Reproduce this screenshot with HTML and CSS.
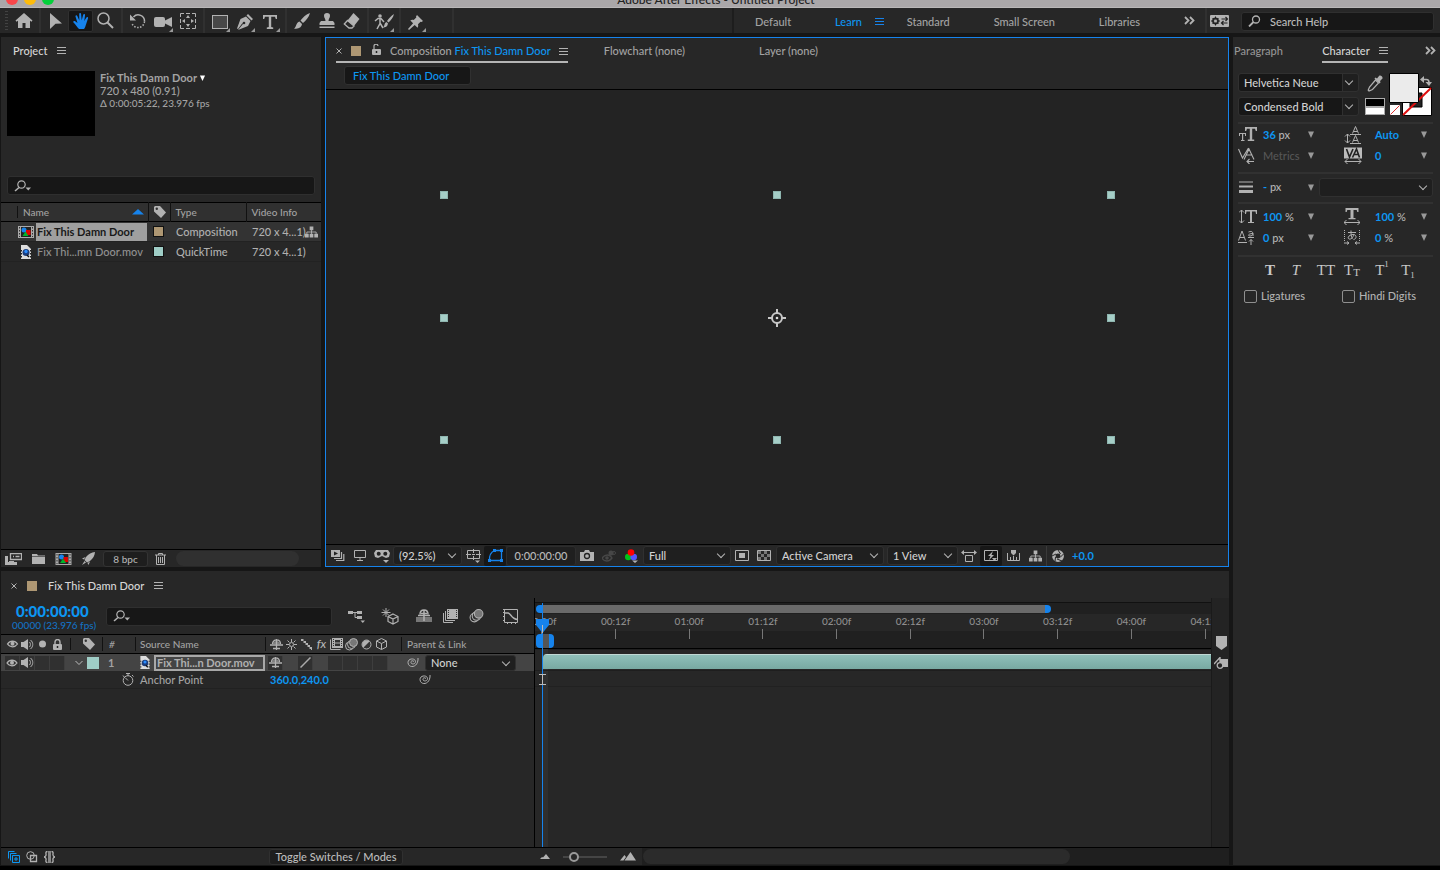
FILE: index.html
```html
<!DOCTYPE html>
<html lang="en">
<head>
<meta charset="utf-8">
<meta name="viewport" content="width=device-width, initial-scale=1">
<title>Adobe After Effects - Untitled Project</title>
<link rel="stylesheet" href="styles.css">
</head>
<body>
<svg class="defs" aria-hidden="true">
  <symbol id="menu" viewBox="0 0 9 8"><path d="M0 .5h9M0 3.5h9M0 6.5h9" stroke="currentColor"/></symbol>
  <symbol id="close" viewBox="0 0 6 6"><path d="M.5.5l5 5M5.500.5l-5 5" stroke="currentColor"/></symbol>
  <symbol id="more" viewBox="0 0 11 9"><path d="M1 1l3.500 3.500L1 8M6 1l3.500 3.500L6 8" fill="none" stroke="currentColor" stroke-width="1.800"/></symbol>
  <symbol id="tri" viewBox="0 0 6 7"><path d="M0 .5h6L3 7z" fill="currentColor"/></symbol>
  <symbol id="home" viewBox="0 0 18 16"><path d="M9 0l8.500 7.500-1 1.200-1.500-1V15h-4.500v-5h-3v5H3V7.700l-1.500 1-1-1.200z" fill="currentColor"/></symbol>
  <symbol id="arrow" viewBox="0 0 12 16"><path d="M0 0l12 10.500-6.500.3L0 16z" fill="currentColor"/></symbol>
  <symbol id="hand" viewBox="0 0 16 16"><path d="M6 16C4 14 2.500 11.500.500 9.500c-.8-1 .6-2 1.700-1.200L4.500 10 2.500 3.500c-.3-1.400 1.400-1.800 1.800-.5L6.300 7.500 6.200 1.200C6.200-.300 8-.300 8.100 1.200L8.700 7.300 10.200 1.800c.4-1.300 2-.9 1.800.5L11.300 8l2-3.300c.7-1.200 2.200-.4 1.700.8L13 11.500c-.6 2-.9 3-2 4.500z" fill="currentColor"/></symbol>
  <symbol id="zoom" viewBox="0 0 17 17"><circle cx="6.500" cy="6.500" r="5.500" fill="none" stroke="currentColor" stroke-width="1.500"/><path d="M10.500 10.500l5.500 5.500" stroke="currentColor" stroke-width="2"/></symbol>
  <symbol id="rotate" viewBox="0 0 16 16"><path d="M3.500 4A6.300 6.300 0 0 1 14.500 8.500" fill="none" stroke="currentColor" stroke-width="1.500"/><path d="M14.500 8.500A6.500 6.500 0 0 1 2 10.500" fill="none" stroke="currentColor" stroke-width="1.500" stroke-dasharray="1.500 1.500"/><path d="M0 1.500v6h6z" fill="currentColor"/></symbol>
  <symbol id="camera" viewBox="0 0 18 12"><rect y="1" width="11" height="10" rx="2" fill="currentColor"/><path d="M10 5l8-4v10l-8-4z" fill="currentColor"/></symbol>
  <symbol id="panbehind" viewBox="0 0 16 16"><path d="M.5 4V.5H4M6 .5h4M12 .5h3.500V4M15.500 6v4M15.500 12v3.500H12M10 15.500H6M4 15.500H.5V12M.5 10V6" fill="none" stroke="currentColor"/><path d="M8 2l2 3H6zM8 14l2-3H6zM2 8l3-2v4zM14 8l-3-2v4z" fill="currentColor"/></symbol>
  <symbol id="rect" viewBox="0 0 16 14"><rect x=".5" y=".5" width="15" height="13" fill="#484848" stroke="currentColor"/></symbol>
  <symbol id="pen" viewBox="0 0 16 16"><path d="M11 0l5 5-1.500 1.500-5-5zM9 2.500L13.500 7 11 12 1 16l5-6-.5-1L1 15 0 14.500 3.500 5z" fill="currentColor"/><circle cx="7" cy="9" r="1.300" fill="#272727"/></symbol>
  <symbol id="type" viewBox="0 0 14 14"><path d="M0 0h14v4h-1.200L12 1.800H8.200V12l2 .5V14H3.800v-1.500l2-.5V1.800H2L1.200 4H0z" fill="currentColor"/></symbol>
  <symbol id="brush" viewBox="0 0 16 16"><path d="M16 0c-1 4-4 7.500-7 10L6.500 7.500C9 4.500 12 1 16 0zM5.500 8.500L8 11c-.5 4-4.500 5-8 4.800C2.500 14 2 9.500 5.500 8.500z" fill="currentColor"/></symbol>
  <symbol id="stamp" viewBox="0 0 16 16"><path d="M8 0c2 0 3 1 3 2.800C11 5 9.500 5.500 9.500 8H14l1.500 2v2H.5v-2L2 8h4.500C6.500 5.500 5 5 5 2.800 5 1 6 0 8 0zM.5 13.500h15V15H.5z" fill="currentColor"/></symbol>
  <symbol id="eraser" viewBox="0 0 16 16"><path d="M10 0l6 6-5.500 7L4 7.500z" fill="currentColor"/><path d="M4 7.500l6.500 5.500-2 2h-3L.8 11z" fill="none" stroke="currentColor" stroke-width="1.300"/></symbol>
  <symbol id="roto" viewBox="0 0 20 16"><circle cx="6" cy="2" r="1.800" fill="currentColor"/><path d="M1 7l3-2.500h3L10 8M6 4.500v5l-3 5.500M6 9l3 5" fill="none" stroke="currentColor" stroke-width="1.500"/><path d="M20 0c-1 4-3 6-5.500 8.500L13 7C15 4.500 17 1.500 20 0zM12.500 8L14 9.500c-.5 3-2.500 4-5 4C11 12 10 9 12.500 8z" fill="currentColor"/></symbol>
  <symbol id="pin" viewBox="0 0 15 15"><path d="M9 0l6 6-1.500 1-1-.3L10 9.300c.4 1.300.2 2.500-.5 3.400L6.700 9.900 1 15l-1-1 5.100-5.700L2.300 5.500c.9-.7 2.100-.9 3.400-.5L8.300 2.500 8 1.500z" fill="currentColor"/></symbol>
  <symbol id="search" viewBox="0 0 13 12"><circle cx="8" cy="4.500" r="3.500" fill="none" stroke="currentColor" stroke-width="1.300"/><path d="M5.500 7L1 11.500" stroke="currentColor" stroke-width="1.800"/></symbol>
  <symbol id="searchmenu" viewBox="0 0 18 12"><circle cx="7.500" cy="4.500" r="3.700" fill="none" stroke="currentColor" stroke-width="1.200"/><path d="M5 7.500L1 11" stroke="currentColor" stroke-width="1.600"/><path d="M11.500 7.500h5.500l-2.700 3z" fill="currentColor"/></symbol>
  <symbol id="sync" viewBox="0 0 19 12"><rect width="19" height="12" rx="1" fill="currentColor"/><circle cx="5.500" cy="6" r="2.600" fill="none" stroke="#222" stroke-width="1.600"/><path d="M5.500 1.500v9M1 6h9M2.500 3l6 6M8.500 3l-6 6" stroke="#222"/><circle cx="5.500" cy="6" r="1.500" fill="currentColor"/><path d="M11.500 4h6M11.500 8h6M15.500 2l2 2-2 2M13.500 6l-2 2 2 2" fill="none" stroke="#222" stroke-width="1.200"/></symbol>
  <symbol id="tag" viewBox="0 0 12 12"><path d="M0 1l1-1h5l6 6.500L7 12 0 5.500z" fill="currentColor"/><circle cx="2.800" cy="2.800" r="1.200" fill="#333"/></symbol>
  <symbol id="comp" viewBox="0 0 16 12"><rect width="16" height="12" fill="#aaa"/><rect x="3" y="1" width="10" height="10" fill="#222"/><path d="M1.500 1v10M14.500 1v10" stroke="#333" stroke-dasharray="1.500 1.500"/><circle cx="6" cy="4" r="2.500" fill="#1683ec"/><rect x="8" y="4" width="4.500" height="5" fill="#e00000"/><path d="M4.500 10l3-4.500L10.500 10z" fill="#00b52b"/></symbol>
  <symbol id="movie" viewBox="0 0 12 14"><path d="M1 0h6l4 4v10H1z" fill="#ddd"/><path d="M1.500 5v8M10.500 5v8" stroke="#222" stroke-dasharray="1.500 1.500"/><circle cx="6" cy="7.500" r="3.500" fill="#1c3d7c"/><circle cx="6" cy="6.500" r="1.700" fill="#2a8dff"/><path d="M7 10l2 2" stroke="#111" stroke-width="1.500"/></symbol>
  <symbol id="flow" viewBox="0 0 14 12"><path d="M5 0h4v4H5zM0 8h4v4H0zM5 8h4v4H5zM10 8h4v4h-4z" fill="currentColor"/><path d="M2 8V6h10v2M7 4v4" fill="none" stroke="currentColor"/></symbol>
  <symbol id="interpret" viewBox="0 0 17 12"><path d="M5.500.5h11v6h-11zM8 3.500h1M10.500 3.500h4" fill="none" stroke="currentColor" stroke-width="1.300"/><path d="M0 3h3v6h9v3H0zM4 8h5v1H4z" fill="currentColor"/></symbol>
  <symbol id="folder" viewBox="0 0 13 10"><path d="M0 0h5l1 1.500h7V10H0z" fill="currentColor"/><path d="M0 2.500h13" stroke="#272727" stroke-width=".6"/></symbol>
  <symbol id="rocket" viewBox="0 0 13 13"><path d="M13 0c-.2 3.500-2 6.500-5 9L5 10.500 2.500 8 4 5c2.500-3 5.500-4.800 9-5zM3.500 5L0 6.500l2 1zM8 9.500L6.500 13l-1-2zM2.500 9L4 10.500 0 13z" fill="currentColor"/></symbol>
  <symbol id="trash" viewBox="0 0 11 12"><path d="M0 2h11M3.500 2V.5h4V2M1.500 2v9.500h8V2M3.500 4v6M5.500 4v6M7.500 4v6" fill="none" stroke="currentColor"/></symbol>
  <symbol id="lockopen" viewBox="0 0 9 11"><path d="M2 5V2.500a2 2 0 0 1 4-.5" fill="none" stroke="currentColor" stroke-width="1.200"/><rect y="5" width="9" height="6" rx="1" fill="currentColor"/><path d="M4.500 7v2" stroke="#222" stroke-width="1.500"/></symbol>
  <symbol id="lock" viewBox="0 0 9 11"><path d="M2 5V3a2.500 2.500 0 0 1 5 0v2" fill="none" stroke="currentColor" stroke-width="1.400"/><rect y="5" width="9" height="6" rx="1" fill="currentColor"/><path d="M4.500 7v2" stroke="#222" stroke-width="1.500"/></symbol>
  <symbol id="preview" viewBox="0 0 14 11"><path d="M0 0h9v7H0z" fill="currentColor"/><path d="M3 1.500l4 2-4 2z" fill="#222"/><path d="M10.500 2v6.500H3M12.800 4v6.500H5" fill="none" stroke="currentColor" stroke-width="1.200"/></symbol>
  <symbol id="monitor" viewBox="0 0 12 11"><path d="M.5.5h11v7H.5zM6 8v2M3 10.500h6" fill="none" stroke="currentColor"/></symbol>
  <symbol id="goggles" viewBox="0 0 16 14"><path d="M2 1h12l2 3-1 4-3 1-4-2-4 2-3-1-1-4z" fill="currentColor"/><circle cx="4.700" cy="4.700" r="2" fill="#222"/><circle cx="11.300" cy="4.700" r="2" fill="#222"/><path d="M9 11h6l-3 3z" fill="currentColor"/></symbol>
  <symbol id="guides" viewBox="0 0 15 14"><path d="M1.500 1.500h12v8h-12zM7.500 0v4M7.500 7v4M0 5.500h5M10 5.500h5M6 5.500h3" fill="none" stroke="currentColor"/><path d="M9 11.500h5l-2.500 2.500z" fill="currentColor"/></symbol>
  <symbol id="mask" viewBox="0 0 15 13"><path d="M1.500 11.500C1 6 3.500 3 6.500 1.500h7v10z" fill="none" stroke="currentColor" stroke-width="1.300"/><path d="M0 10h3v3H0zM12 10h3v3h-3zM12 0h3v3h-3zM5 0h3v3H5z" fill="currentColor"/></symbol>
  <symbol id="photo" viewBox="0 0 14 11"><path d="M0 2h4l1-2h4l1 2h4v9H0z" fill="currentColor"/><circle cx="7" cy="6" r="2.500" fill="none" stroke="#222" stroke-width="1.300"/></symbol>
  <symbol id="showsnap" viewBox="0 0 14 12"><path d="M0 8c3-4 8-4 10 0-3 4-8 4-10 0z" fill="none" stroke="currentColor" stroke-width="1.300"/><circle cx="5" cy="8" r="1.800" fill="currentColor"/><circle cx="9" cy="3" r="2.500" fill="currentColor"/><circle cx="12" cy="3" r="1.500" fill="none" stroke="currentColor"/></symbol>
  <symbol id="rgb" viewBox="0 0 13 14"><circle cx="3.300" cy="8" r="3.300" fill="#00c318"/><circle cx="8.700" cy="8" r="3.300" fill="#5555ff"/><circle cx="6" cy="3.500" r="3.300" fill="#f00"/><path d="M7 11.500h6l-3 2.500z" fill="currentColor"/></symbol>
  <symbol id="roi" viewBox="0 0 14 11"><path d="M.5.5h13v10H.5z" fill="none" stroke="currentColor"/><path d="M4 3h6v5H4z" fill="currentColor"/></symbol>
  <symbol id="checker" viewBox="0 0 14 11"><path d="M.5.5h13v10H.5z" fill="none" stroke="currentColor"/><path d="M1 1h3v3H1zM7 1h3v3H7zM4 4h3v3H4zM10 4h3v3h-3zM1 7h3v3H1zM7 7h3v3H7z" fill="#777"/></symbol>
  <symbol id="aspect" viewBox="0 0 16 12"><path d="M1 2.500h14M4.500 5.500h7v6h-7z" fill="none" stroke="currentColor"/><path d="M0 2.500L3 0v5zM16 2.500L13 0v5z" fill="currentColor"/></symbol>
  <symbol id="fast" viewBox="0 0 14 13"><path d="M.5 1.500h13v10H.5z" fill="none" stroke="currentColor"/><path d="M9 2L4 7h2.500L5 11l5-5H7.500zM8 9h5l-2.500 3z" fill="currentColor"/></symbol>
  <symbol id="tlicon" viewBox="0 0 13 11"><path d="M.5 3v7.500h12V3M3.500 10V7M6.500 10V6M9.500 10V7" fill="none" stroke="currentColor"/><path d="M4 0h5v3L6.500 5.500 4 3z" fill="currentColor"/></symbol>
  <symbol id="aperture" viewBox="0 0 12 12"><circle cx="6" cy="6" r="4.200" fill="none" stroke="currentColor" stroke-width="3.500"/><path d="M6 0l2.500 4M11.500 4L8 7.500M10 11L5 9M3 11.500L3.500 7M0 6l4-2" stroke="#272727"/></symbol>
  <symbol id="target" viewBox="0 0 18 18"><circle cx="9" cy="9" r="5" fill="none" stroke="#c8c8c8" stroke-width="2"/><circle cx="9" cy="9" r="1.300" fill="#ddd"/><path d="M9 0v5M9 13v5M0 9h5M13 9h5" stroke="#c8c8c8" stroke-width="2"/></symbol>
  <symbol id="eye" viewBox="0 0 12 8"><path d="M1 4C3.500.3 8.500.3 11 4 8.500 7.700 3.500 7.700 1 4z" fill="none" stroke="currentColor" stroke-width="1.300"/><circle cx="6" cy="3.800" r="2" fill="currentColor"/></symbol>
  <symbol id="speaker" viewBox="0 0 13 11"><path d="M0 3h2.500L7 0v11L2.500 8H0z" fill="currentColor"/><path d="M8.500 3c1.300 1.500 1.300 3.500 0 5M9.500 1c3 2.500 3 6.500 0 9" fill="none" stroke="currentColor"/></symbol>
  <symbol id="dot" viewBox="0 0 8 8"><circle cx="4" cy="4" r="3.500" fill="currentColor"/></symbol>
  <symbol id="shy" viewBox="0 0 13 11"><path d="M2.500 5c0-5.500 8-5.500 8 0M0 6h13M3 9.500h7M6.500 0v11" fill="none" stroke="currentColor" stroke-width="1.300"/><path d="M3 5c.500-4 6.500-4 7 0z" fill="currentColor" opacity=".6"/></symbol>
  <symbol id="sun" viewBox="0 0 11 11"><circle cx="5.500" cy="5.500" r="2" fill="none" stroke="currentColor"/><path d="M5.500 0v3M5.500 8v3M0 5.500h3M8 5.500h3M1.500 1.500l2 2M7.500 7.500l2 2M9.500 1.500l-2 2M3.500 7.500l-2 2" stroke="currentColor"/></symbol>
  <symbol id="quality" viewBox="0 0 11 11"><path d="M0 1h2.500M2.500 3H5M4.500 5H7M6.500 7H9M8.500 9H11M10 10.500h1" fill="none" stroke="currentColor" stroke-width="1.800"/></symbol>
  <symbol id="film" viewBox="0 0 13 12"><path d="M.500 1.500v10h10" fill="none" stroke="currentColor"/><path d="M2 0h11v10H2z" fill="currentColor"/><path d="M3.500 1v8M11.500 1v8" stroke="#333" stroke-dasharray="1 1"/><path d="M5 2h5v2.500H5zM5 5.500h5V8H5z" fill="#333"/></symbol>
  <symbol id="frames" viewBox="0 0 15 14"><path d="M.500 4v9.500H10M2.500 2v9.500H12" fill="none" stroke="currentColor"/><path d="M4 0h11v10H4z" fill="currentColor"/><path d="M5.500 1v8M13.500 1v8" stroke="#333" stroke-dasharray="1 1"/></symbol>
  <symbol id="blur" viewBox="0 0 14 13"><circle cx="5" cy="8" r="4" fill="none" stroke="currentColor"/><circle cx="7" cy="6.500" r="4" fill="#333" stroke="currentColor"/><circle cx="9" cy="4.500" r="4" fill="#777" stroke="currentColor"/></symbol>
  <symbol id="adjust" viewBox="0 0 11 11"><circle cx="5.500" cy="5.500" r="4.500" fill="#333" stroke="currentColor"/><path d="M2.500 8.500A4.200 4.200 0 0 1 8.500 2.500z" fill="currentColor"/></symbol>
  <symbol id="cube" viewBox="0 0 12 12"><path d="M6 .5l5 2.500v6L6 11.500 1 9V3zM1 3l5 2.500L11 3M6 5.500v6" fill="none" stroke="currentColor"/></symbol>
  <symbol id="spiral" viewBox="0 0 12 11"><path d="M7 4.500c-1.500-1.500-3.500-.5-3 1.200.6 2 4.500 1.500 4.500-1C8.500.8 1 1 1 5.500c0 5.500 9 6 10-2.500V1" fill="none" stroke="currentColor"/></symbol>
  <symbol id="stopwatch" viewBox="0 0 12 13"><circle cx="6" cy="7.500" r="4.800" fill="none" stroke="currentColor"/><path d="M4 .5h4M6 1v2M10 2l1.500 1.500M1 2.500L3 5M6 7.500L3.500 5" stroke="currentColor"/></symbol>
  <symbol id="mini" viewBox="0 0 18 14"><path d="M0 2h5v3H0zM9 2h5v3H9zM9 7h5v3H9z" fill="currentColor"/><path d="M5 3.500h4M7 3.500v5h2" fill="none" stroke="currentColor"/><path d="M12.500 11.500H17L14.800 14z" fill="currentColor"/></symbol>
  <symbol id="draft3d" viewBox="0 0 18 17"><path d="M12 6l5 2.500v5L12 16l-5-2.500v-5zM7 8.500l5 2.500 5-2.500M12 11v5" fill="none" stroke="currentColor" stroke-width="1.200"/><path d="M5 0v9M.5 4.500h9M2 1.500l6 6M8 1.500l-6 6" stroke="currentColor"/></symbol>
  <symbol id="hideshy" viewBox="0 0 16 14"><path d="M0 8h16v5H0z" fill="#777"/><path d="M4 5.500c0-6 8-6 8 0M2 6.500h12M8 1v11M5 4.500h6" fill="none" stroke="currentColor" stroke-width="1.500"/></symbol>
  <symbol id="graph" viewBox="0 0 16 16"><path d="M1.500 1.500h13v13h-13zM0 1.500h2M0 4.500h2M0 8.500h2M0 12.500h2M4.500 14v2M8.500 14v2M12.500 14v2" fill="none" stroke="currentColor"/><path d="M2 5h3c3 0 3 6 9.500 6.500" fill="none" stroke="currentColor" stroke-width="1.400"/></symbol>
  <symbol id="marker" viewBox="0 0 11 14"><path d="M0 0h11v10l-5.500 4L0 10z" fill="currentColor"/></symbol>
  <symbol id="compbtn" viewBox="0 0 14 12"><path d="M6 2h8v8H6z" fill="currentColor"/><path d="M0 7l6-6.500V6" fill="none" stroke="currentColor" stroke-width="1.400"/><circle cx="6" cy="8.500" r="2.800" fill="#222" stroke="currentColor" stroke-width="1.300"/></symbol>
  <symbol id="layers" viewBox="0 0 12 12"><path d="M.5 7.500v-7h6M2.500 9.500v-7h6M4.500 4.500h7v7h-7zM8 6v4M6 8h4" fill="none" stroke="currentColor"/></symbol>
  <symbol id="modes" viewBox="0 0 12 12"><circle cx="4.500" cy="4.500" r="3.800" fill="none" stroke="currentColor"/><path d="M4.500 4.500h6v6h-6z" fill="none" stroke="currentColor" stroke-width="1.300"/></symbol>
  <symbol id="braces" viewBox="0 0 11 12"><path d="M4 0h3v12H4z" fill="#888"/><path d="M3.500.5Q1.500.5 2 3t-2 3q2.500.5 2 3t1.500 2.500M7.500.5Q9.500.5 9 3t2 3q-2.500.5-2 3t-1.500 2.500" fill="none" stroke="currentColor" stroke-width="1.300"/></symbol>
  <symbol id="peak" viewBox="0 0 10 5"><path d="M0 5l2-2 1 .5L6 0l4 5z" fill="currentColor"/></symbol>
  <symbol id="peaks" viewBox="0 0 16 9"><path d="M0 8.500L4.500 3 6 5 3.500 8.500zM4.500 8.500L10.500 0 16 8.500z" fill="currentColor"/></symbol>
  <symbol id="dropper" viewBox="0 0 16 17"><path d="M10 3.500l2-2.500c1-1.200 4 0 3.500 2.500L13 6l.5 1.500-1 1-5-5 1-1z" fill="currentColor"/><path d="M8.500 5l3 3-6 6.500-3.500 1.500-.8-.8L2.500 12z" fill="none" stroke="currentColor" stroke-width="1.200"/></symbol>
  <symbol id="swap" viewBox="0 0 12 10"><path d="M3 3.500h3.500Q9 3.500 9 6.500" fill="none" stroke="currentColor" stroke-width="1.600"/><path d="M0 3.500L4 0v7zM5.500 6h6.500L9 10z" fill="currentColor"/></symbol>
  <symbol id="leading" viewBox="0 0 17 18"><path d="M3.500 8v9M1 10.500L3.500 8 6 10.500M1 14.500L3.500 17 6 14.500M6 8.500h11M6 17.500h11M8.500 7.500L11.500.5l3 7M9.500 5.500h4M8.500 16.500l3-7 3 7M9.500 14.500h4" fill="none" stroke="currentColor"/></symbol>
  <symbol id="kern" viewBox="0 0 18 16"><path d="M.5 1.500l4 9 6-10M6 12l5-10.500 5 10.500M8.500 7.500h6M9 14h7M11.500 11.500L9 14l2.500 2.500" fill="none" stroke="currentColor" stroke-width="1.100"/></symbol>
  <symbol id="track" viewBox="0 0 18 16"><path d="M0 0h18v11H0z" fill="#bbb"/><path d="M2.500 1.500l3 8 3.500-8M8.500 10l4-8.500 3 8.500M10 7h5" fill="none" stroke="#222" stroke-width="1.600"/><path d="M1 14h16M3.500 11.500L1 14l2.500 2.500M14.500 11.500L17 14l-2.500 2.500" fill="none" stroke="currentColor"/></symbol>
  <symbol id="stroke" viewBox="0 0 14 12"><path d="M0 1h14" stroke="currentColor"/><path d="M0 5.500h14" stroke="currentColor" stroke-width="2"/><path d="M0 10.500h14" stroke="currentColor" stroke-width="3"/></symbol>
  <symbol id="vscale" viewBox="0 0 18 15"><path d="M2.500 1v13M0 3.500L2.500 1 5 3.500M0 11.500L2.500 14 5 11.500" fill="none" stroke="currentColor"/><path d="M6 1h12v4h-1l-.5-2.500h-3.500V13h2v1H9v-1h2V2.500H7.500L7 5H6z" fill="currentColor"/></symbol>
  <symbol id="hscale" viewBox="0 0 16 17"><path d="M1.500 0h13v4h-1.200l-.6-2H9.500v8h2v1.200h-7V10h2V2H3.300l-.6 2H1.500z" fill="currentColor"/><path d="M0 14.500h16M2.500 12L0 14.500 2.500 17M13.500 12l2.500 2.500-2.500 2.500" fill="none" stroke="currentColor"/></symbol>
  <symbol id="baseline" viewBox="0 0 16 15"><path d="M.5 10.500L4 1l3.500 9.500M2 7.500h4M0 12.500h9M10 7.500h6M10.500 2c4-1.500 4.500 0 4.500 4M15 3.500c-5 0-5.500 2.500-3 2.500 1.500 0 3-1 3-2.500M13 15V9.500M11 11.500l2-2 2 2" fill="none" stroke="currentColor"/></symbol>
  <symbol id="tsume" viewBox="0 0 16 15"><path d="M.5 0v11M15.500 0v11" stroke="currentColor" stroke-dasharray="1 1"/><path d="M4 2.500h8M7 .5c0 5 .5 7 1.500 8.500M10 4c-1 4-3 5.500-5 5-2.500-1.500 1-4.500 4-4.500 4 0 4 4.500.500 5M0 13h5M3 11.500L5 13l-2 1.500M16 13h-5M13 11.500L11 13l2 1.500" fill="none" stroke="currentColor"/></symbol>
</svg>

<header class="titlebar">
  <div class="lights"><i class="red"></i><i class="yellow"></i><i class="green"></i></div>
  <span class="window-title">Adobe After Effects - Untitled Project *</span>
</header>

<div class="toolbar">
  <div class="group home-group"><i class="grip"></i><button class="tool" aria-label="Home"><svg width="18" height="16"><use href="#home"/></svg></button></div>
  <div class="group">
    <button class="tool" aria-label="Selection"><svg width="12" height="16"><use href="#arrow"/></svg></button>
    <button class="tool active" aria-label="Hand"><svg width="16" height="16"><use href="#hand"/></svg></button>
    <button class="tool" aria-label="Zoom"><svg width="17" height="17"><use href="#zoom"/></svg></button>
  </div>
  <div class="group">
    <button class="tool" aria-label="Rotate"><svg width="16" height="16"><use href="#rotate"/></svg></button>
    <button class="tool sub" aria-label="Camera"><svg width="18" height="12"><use href="#camera"/></svg></button>
    <button class="tool" aria-label="Pan behind"><svg width="16" height="16"><use href="#panbehind"/></svg></button>
  </div>
  <div class="group">
    <button class="tool sub" aria-label="Rectangle"><svg width="16" height="14"><use href="#rect"/></svg></button>
    <button class="tool sub" aria-label="Pen"><svg width="16" height="16"><use href="#pen"/></svg></button>
    <button class="tool sub" aria-label="Type"><svg width="14" height="14"><use href="#type"/></svg></button>
  </div>
  <div class="group">
    <button class="tool" aria-label="Brush"><svg width="16" height="16"><use href="#brush"/></svg></button>
    <button class="tool" aria-label="Clone stamp"><svg width="16" height="16"><use href="#stamp"/></svg></button>
    <button class="tool" aria-label="Eraser"><svg width="17" height="16"><use href="#eraser"/></svg></button>
  </div>
  <div class="group"><button class="tool sub" aria-label="Roto brush"><svg width="20" height="16"><use href="#roto"/></svg></button></div>
  <div class="group pin-group"><button class="tool sub" aria-label="Puppet pin"><svg width="15" height="15"><use href="#pin"/></svg></button></div>
  <nav class="workspaces">
    <button>Default</button>
    <button class="current">Learn<svg width="9" height="8"><use href="#menu"/></svg></button>
    <button>Standard</button>
    <button>Small Screen</button>
    <button>Libraries</button>
    <button class="overflow" aria-label="More workspaces"><svg width="11" height="9"><use href="#more"/></svg></button>
  </nav>
  <div class="help">
    <button aria-label="Sync settings"><svg width="19" height="12"><use href="#sync"/></svg></button>
    <label class="field"><svg width="13" height="12"><use href="#search"/></svg><input type="search" placeholder="Search Help" aria-label="Search Help"></label>
  </div>
</div>

<main class="workspace">
  <div class="left">
    <div class="upper">
      <section class="panel project">
        <div class="tabs"><button class="tab bright">Project<svg width="9" height="8"><use href="#menu"/></svg></button></div>
        <div class="summary">
          <div class="thumb"></div>
          <div><button class="comp-name">Fix This Damn Door<svg width="7" height="6"><use href="#tri"/></svg></button><p>720 x 480 (0.91)</p><p class="duration">Δ 0:00:05:22, 23.976 fps</p></div>
        </div>
        <label class="field find"><svg width="18" height="12"><use href="#searchmenu"/></svg><input type="search" aria-label="Search project"></label>
        <table class="items">
          <colgroup><col class="c-name"><col class="c-tag"><col class="c-type"><col class="c-info"><col></colgroup>
          <thead><tr><th class="name-head"><span>Name<svg width="12" height="6"><path d="M0 5.500L6 0l6 5.500z" fill="#1683ec"/></svg></span></th><th><svg width="12" height="12"><use href="#tag"/></svg></th><th>Type</th><th>Video Info</th><th></th></tr></thead>
          <tbody>
            <tr class="selected"><td><div class="item"><svg width="16" height="12"><use href="#comp"/></svg><span>Fix This Damn Door</span></div></td><td><i class="label tan"></i></td><td>Composition</td><td>720 x 4...1)</td><td><svg width="13" height="12"><use href="#flow"/></svg></td></tr>
            <tr><td><div class="item"><svg width="16" height="14"><use href="#movie"/></svg><span>Fix Thi...mn Door.mov</span></div></td><td><i class="label teal"></i></td><td>QuickTime</td><td>720 x 4...1)</td><td></td></tr>
          </tbody>
        </table>
        <div class="project-footer">
          <button aria-label="Interpret footage"><svg width="17" height="12"><use href="#interpret"/></svg></button>
          <button aria-label="New folder"><svg width="13" height="10"><use href="#folder"/></svg></button>
          <button aria-label="New composition"><svg width="17" height="12"><use href="#comp"/></svg></button>
          <button aria-label="Project settings"><svg width="13" height="13"><use href="#rocket"/></svg></button>
          <button class="depth">8 bpc</button>
          <button aria-label="Delete"><svg width="11" height="12"><use href="#trash"/></svg></button>
          <i class="scroll"></i>
        </div>
      </section>

      <section class="panel viewer">
        <div class="tabs viewer-tabs">
          <div class="tab open"><button aria-label="Close"><svg width="6" height="6"><use href="#close"/></svg></button><i class="chip"></i><button aria-label="Lock"><svg width="9" height="11"><use href="#lockopen"/></svg></button><span>Composition <b>Fix This Damn Door</b></span><button aria-label="Panel menu"><svg width="9" height="8"><use href="#menu"/></svg></button></div>
          <button class="tab">Flowchart (none)</button>
          <button class="tab layer-tab">Layer (none)</button>
        </div>
        <div class="crumbs"><button>Fix This Damn Door</button></div>
        <div class="canvas">
          <div class="frame">
            <i></i><i></i><i></i>
            <i></i><svg width="18" height="18"><use href="#target"/></svg><i></i>
            <i></i><i></i><i></i>
          </div>
        </div>
        <div class="viewer-footer">
          <button aria-label="Always preview"><svg width="14" height="11"><use href="#preview"/></svg></button>
          <button aria-label="Primary viewer"><svg width="12" height="11"><use href="#monitor"/></svg></button>
          <button aria-label="VR view"><svg width="16" height="14"><use href="#goggles"/></svg></button>
          <span class="drop zoom-drop"><select aria-label="Magnification"><option>(92.5%)</option></select></span>
          <button aria-label="Guides"><svg width="15" height="14"><use href="#guides"/></svg></button>
          <button class="on" aria-label="Mask visibility"><svg width="15" height="13"><use href="#mask"/></svg></button>
          <button class="time">0:00:00:00</button>
          <button aria-label="Snapshot"><svg width="14" height="11"><use href="#photo"/></svg></button>
          <button class="dim" aria-label="Show snapshot"><svg width="14" height="12"><use href="#showsnap"/></svg></button>
          <button aria-label="Channels"><svg width="13" height="14"><use href="#rgb"/></svg></button>
          <span class="drop res-drop"><select aria-label="Resolution"><option>Full</option></select></span>
          <button aria-label="Region of interest"><svg width="14" height="11"><use href="#roi"/></svg></button>
          <button aria-label="Transparency grid"><svg width="14" height="11"><use href="#checker"/></svg></button>
          <span class="drop cam-drop"><select aria-label="3D view"><option>Active Camera</option></select></span>
          <span class="drop view-drop"><select aria-label="View layout"><option>1 View</option></select></span>
          <button aria-label="Pixel aspect correction"><svg width="16" height="12"><use href="#aspect"/></svg></button>
          <button class="pressed" aria-label="Fast previews"><svg width="14" height="13"><use href="#fast"/></svg></button>
          <button aria-label="Timeline"><svg width="13" height="11"><use href="#tlicon"/></svg></button>
          <button aria-label="Flowchart"><svg width="13" height="12"><use href="#flow"/></svg></button>
          <button class="exposure-icon" aria-label="Reset exposure"><svg width="12" height="12"><use href="#aperture"/></svg></button>
          <button class="hot">+0.0</button>
        </div>
      </section>
    </div>

    <section class="panel timeline">
      <div class="timeline-tab"><button aria-label="Close"><svg width="6" height="6"><use href="#close"/></svg></button><i class="chip"></i><span>Fix This Damn Door</span><button aria-label="Panel menu"><svg width="9" height="8"><use href="#menu"/></svg></button></div>
      <div class="timeline-body">
        <div class="outline">
          <div class="controls">
            <div class="clock"><button>0:00:00:00</button><small>00000 (23.976 fps)</small></div>
            <label class="field"><svg width="18" height="12"><use href="#searchmenu"/></svg><input type="search" aria-label="Search layers"></label>
            <div class="switches">
              <button aria-label="Mini-flowchart"><svg width="18" height="14"><use href="#mini"/></svg></button>
              <button aria-label="Draft 3D"><svg width="18" height="17"><use href="#draft3d"/></svg></button>
              <button aria-label="Hide shy layers"><svg width="16" height="14"><use href="#hideshy"/></svg></button>
              <button aria-label="Frame blending"><svg width="15" height="14"><use href="#frames"/></svg></button>
              <button aria-label="Motion blur"><svg width="15" height="14"><use href="#blur"/></svg></button>
            </div>
            <button class="graph" aria-label="Graph editor"><svg width="16" height="16"><use href="#graph"/></svg></button>
          </div>
          <div class="cols head">
            <div class="slots"><svg width="12" height="8"><use href="#eye"/></svg><svg width="13" height="11"><use href="#speaker"/></svg><svg width="8" height="8"><use href="#dot"/></svg><svg width="9" height="11"><use href="#lock"/></svg></div>
            <div class="tag-cell"><svg width="12" height="12"><use href="#tag"/></svg></div>
            <div class="num"><em>#</em></div>
            <div class="src">Source Name</div>
            <div class="slots"><svg width="13" height="11"><use href="#shy"/></svg><svg width="11" height="11"><use href="#sun"/></svg><svg width="11" height="11"><use href="#quality"/></svg><em class="fx">fx</em><svg width="13" height="12"><use href="#film"/></svg><svg width="13" height="13"><use href="#blur"/></svg><svg width="11" height="11"><use href="#adjust"/></svg><svg width="12" height="12"><use href="#cube"/></svg></div>
            <div class="link">Parent &amp; Link</div>
            <div></div>
          </div>
          <div class="cols layer">
            <div class="slots"><button class="cell" aria-label="Visible"><svg width="12" height="8"><use href="#eye"/></svg></button><button class="cell" aria-label="Audio"><svg width="13" height="11"><use href="#speaker"/></svg></button><button class="cell" aria-label="Solo"></button><button class="cell" aria-label="Lock"></button></div>
            <div class="expand"><button aria-label="Collapse"><svg width="8" height="6"><path d="M.5 1L4 4.500 7.500 1" fill="none" stroke="#bbb"/></svg></button><i class="swatch"></i></div>
            <div class="num">1</div>
            <div class="src"><svg width="12" height="13"><use href="#movie"/></svg><span class="layer-name">Fix Thi...n Door.mov</span></div>
            <div class="slots"><button class="cell" aria-label="Shy"><svg width="13" height="11"><use href="#shy"/></svg></button><i></i><button class="cell" aria-label="Quality"><svg width="11" height="11"><path d="M.5 10.500l10-10" stroke="#aaa" stroke-width="1.500"/></svg></button><i></i><button class="cell" aria-label="Frame blend"></button><button class="cell" aria-label="Motion blur"></button><button class="cell" aria-label="Adjustment"></button><button class="cell" aria-label="3D"></button></div>
            <div class="parent"><svg width="12" height="11"><use href="#spiral"/></svg><span class="drop"><select aria-label="Parent"><option>None</option></select></span></div>
          </div>
          <div class="cols prop">
            <div class="prop-name"><button aria-label="Stopwatch"><svg width="12" height="13"><use href="#stopwatch"/></svg></button>Anchor Point</div>
            <div class="prop-value"><button class="hot">360.0</button>,<button class="hot">240.0</button></div>
            <div class="prop-link"><svg width="12" height="11"><use href="#spiral"/></svg></div>
          </div>
        </div>

        <div class="track">
          <div class="frame-span"></div>
          <div class="navigator"><i></i><b></b><i></i></div>
          <div class="ruler"><span>00:00f</span><span>00:12f</span><span>01:00f</span><span>01:12f</span><span>02:00f</span><span>02:12f</span><span>03:00f</span><span>03:12f</span><span>04:00f</span><span>04:12f</span></div>
          <div class="workarea"><i></i><b></b><i></i></div>
          <div class="clip-row"><div class="clip"></div></div>
          <div class="prop-row"></div>
          <div class="playhead"><svg width="13" height="14"><path d="M0 0h13v6L6.500 14 0 6z" fill="#1683ec"/><path d="M6.500 6v8" stroke="#bbb"/></svg></div>
          <svg class="ibeam" width="7" height="11"><path d="M0 .5h7M0 10.500h7M3.500 0v11" stroke="#bbb"/></svg>
        </div>
        <div class="side"><button aria-label="Marker bin"><svg width="11" height="14"><use href="#marker"/></svg></button><button aria-label="Comp button"><svg width="14" height="12"><use href="#compbtn"/></svg></button></div>
      </div>
      <div class="timeline-footer">
        <div class="footer-left">
          <button class="hot" aria-label="Layer switches"><svg width="12" height="12"><use href="#layers"/></svg></button>
          <button aria-label="Transfer controls"><svg width="12" height="12"><use href="#modes"/></svg></button>
          <button aria-label="In, out, duration"><svg width="11" height="12"><use href="#braces"/></svg></button>
          <button class="toggle">Toggle Switches / Modes</button>
        </div>
        <svg width="10" height="5"><use href="#peak"/></svg>
        <input class="time-zoom" type="range" min="0" max="100" value="18" aria-label="Time zoom">
        <svg width="16" height="9"><use href="#peaks"/></svg>
        <div class="scroll-space"><i class="scroll"></i></div>
      </div>
    </section>
  </div>

  <aside class="panel character">
    <div class="tabs char-tabs"><button class="tab">Paragraph</button><button class="tab open bright">Character<svg width="9" height="8"><use href="#menu"/></svg></button><button class="overflow" aria-label="More panels"><svg width="11" height="9"><use href="#more"/></svg></button></div>
    <div class="font">
      <div class="font-picks">
        <span class="drop split"><select aria-label="Font family"><option>Helvetica Neue</option></select></span>
        <span class="drop split"><select aria-label="Font style"><option>Condensed Bold</option></select></span>
      </div>
      <div class="font-tools"><button aria-label="Eyedropper"><svg width="16" height="17"><use href="#dropper"/></svg></button><button class="bw" aria-label="Black and white"></button></div>
      <svg class="colors" width="44" height="44" role="img" aria-label="Fill and stroke">
        <path d="M13.500 14.500h29v28h-29z" fill="#fff" stroke="#000"/><path d="M21 20h12v14H21z" fill="#222" stroke="#000"/><path d="M14 42L42 15" stroke="#e01010" stroke-width="2"/>
        <path d="M.5.5h29v29H.5z" fill="#ebebeb" stroke="#000"/>
        <path d="M1 32h10v10H1z" fill="#fff"/><path d="M1.500 41.500l9-9" stroke="#d33"/>
        <use href="#swap" x="31" y="3" width="12" height="10"/>
      </svg>
    </div>
    <div class="props sec1">
      <svg width="18" height="15"><path d="M0 6h7v3H6V7H4.200v6H5.500v1H2v-1h1V7H1v2H0zM6 0h12v4h-1.200L16 1.800h-2.800V12.500h2V14H8.800v-1.500h2V1.800H8L7.200 4H6z" fill="#b0b0b0"/></svg><span><button class="hot">36</button> px</span><button class="tri" aria-label="Size"><svg width="6" height="7"><use href="#tri"/></svg></button>
      <svg width="17" height="18"><use href="#leading"/></svg><span><button class="hot">Auto</button></span><button class="tri" aria-label="Leading"><svg width="6" height="7"><use href="#tri"/></svg></button>
      <svg width="18" height="17"><use href="#kern"/></svg><span class="faded">Metrics</span><button class="tri" aria-label="Kerning"><svg width="6" height="7"><use href="#tri"/></svg></button>
      <svg width="18" height="17"><use href="#track"/></svg><span><button class="hot">0</button></span><button class="tri" aria-label="Tracking"><svg width="6" height="7"><use href="#tri"/></svg></button>
    </div>
    <div class="props sec2">
      <svg width="14" height="12"><use href="#stroke"/></svg><span><button class="hot">-</button> px</span><button class="tri" aria-label="Stroke width"><svg width="6" height="7"><use href="#tri"/></svg></button>
      <span class="drop stroke-drop"><select aria-label="Stroke order"><option></option></select></span>
    </div>
    <div class="props sec3">
      <svg width="18" height="15"><use href="#vscale"/></svg><span><button class="hot">100</button> %</span><button class="tri" aria-label="Vertical scale"><svg width="6" height="7"><use href="#tri"/></svg></button>
      <svg width="16" height="17"><use href="#hscale"/></svg><span><button class="hot">100</button> %</span><button class="tri" aria-label="Horizontal scale"><svg width="6" height="7"><use href="#tri"/></svg></button>
      <svg width="16" height="15"><use href="#baseline"/></svg><span><button class="hot">0</button> px</span><button class="tri" aria-label="Baseline shift"><svg width="6" height="7"><use href="#tri"/></svg></button>
      <svg width="16" height="15"><use href="#tsume"/></svg><span><button class="hot">0</button> %</span><button class="tri" aria-label="Tsume"><svg width="6" height="7"><use href="#tri"/></svg></button>
    </div>
    <div class="styles"><div><button><b>T</b></button><button><em>T</em></button></div><div><button>TT</button><button>T<small>T</small></button></div><div><button>T<span class="sup">1</span></button><button>T<span class="sub">1</span></button></div></div>
    <div class="checks"><label><input type="checkbox">Ligatures</label><label><input type="checkbox">Hindi Digits</label></div>
  </aside>
</main>
</body>
</html>
```

FILE: styles.css
```css
:root {
  --bg: #272727;
  --gap: #161616;
  --well: #171717;
  --icon: #b2b2b2;
  --text: #a3a3a3;
  --bright: #d6d6d6;
  --blue: #1683ec;
  --hot: #0d96f2;
  --tan: #ae9773;
  --teal: #9fcdc6;
}
* { box-sizing: border-box; }
body {
  margin: 0;
  min-height: 100vh;
  display: flex;
  flex-direction: column;
  background: var(--gap);
  border-bottom: 4px solid #000;
  color: var(--text);
  font: 500 11px/14px Lato, "Noto Sans", sans-serif;
  overflow-x: hidden;
}
button, input, select { font: inherit; color: inherit; }
button { background: none; border: 0; padding: 0; display: inline-flex; align-items: center; justify-content: center; white-space: nowrap; }
svg { display: block; flex: none; color: var(--icon); }
p { margin: 0; }
.defs { display: none; }

.titlebar { position: relative; height: 8px; overflow: hidden; background: #aaa7a9; border-bottom: 1px solid #b9b7b8; display: flex; justify-content: center; color: #222; }
.window-title { font-size: 12px; line-height: 14px; margin-top: -7px; }
.lights { position: absolute; left: 6px; top: -7px; display: flex; gap: 6px; }
.lights i { width: 12px; height: 12px; border-radius: 50%; }
.red { background: #f9464a; }
.yellow { background: #fdbb0c; }
.green { background: #05cf3b; }

.toolbar { height: 25px; display: flex; background: var(--bg); }
.group { display: flex; align-items: center; border-left: 2px solid #303030; padding: 0 3px 0 2px; }
.home-group { border: 0; width: 39px; padding: 0 0 0 5px; gap: 3px; }
.grip { width: 3px; height: 19px; background: repeating-linear-gradient(#424242 0 1px, transparent 1px 3px); }
.pin-group { border-right: 2px solid #303030; width: 55px; }
.tool { position: relative; width: 25px; height: 22px; }
.tool.active { background: #161616; border: 1px solid #303030; border-radius: 2px; }
.tool.active svg { color: var(--blue); }
.tool.sub::after { content: ""; position: absolute; right: 2px; bottom: 1px; border: 2px solid; border-color: transparent #999 #999 transparent; }
.workspaces { margin-left: auto; width: 473px; border-left: 2px solid #1d1d1d; padding: 2px 10px 0 21px; display: flex; justify-content: space-between; }
.workspaces .current { color: var(--hot); gap: 13px; margin-right: -21px; }
.workspaces .current svg { color: var(--blue); }
.workspaces .overflow { height: 21px; }
.help { width: 235px; border-left: 2px solid #303030; display: flex; align-items: center; gap: 12px; padding: 1px 6px 0 3px; }
.field { display: flex; align-items: center; gap: 9px; height: 19px; padding: 0 6px; background: var(--well); border: 1px solid #2f2f2f; border-radius: 3px; flex: 1; }
.field input { flex: 1; min-width: 0; height: 16px; padding: 0; border: 0; outline: 0; background: none; }
.field input::placeholder { color: #bcbcbc; opacity: 1; }

.workspace { flex: 1; display: flex; gap: 4px; padding: 4px 0 1px 1px; }
.left { flex: 1; min-width: 0; display: flex; flex-direction: column; gap: 4px; }
.upper { flex: 1; display: flex; gap: 4px; }
.panel { background: var(--bg); }
.tabs { display: flex; height: 28px; align-items: flex-start; }
.tab { height: 26px; padding: 2px 0 0; display: flex; align-items: center; white-space: nowrap; }
.tab.open { border-bottom: 2px solid #b5b5b5; padding-top: 4px; }
.tab.bright { color: var(--bright); gap: 10px; }
.chip { width: 10px; height: 10px; background: var(--tan); }

.project { width: 320px; display: flex; flex-direction: column; }
.project .tabs { padding: 0 12px; }
.summary { display: flex; gap: 5px; padding: 6px; height: 105px; line-height: 13px; }
.thumb { width: 88px; height: 65px; background: #000; }
.comp-name { line-height: 12px; font-weight: 700; gap: 2px; }
.comp-name svg { color: #fff; }
.duration { font-size: 10px; }
.find { flex: none; margin: 6px 6px 7px; }
.items { width: 100%; table-layout: fixed; border-collapse: collapse; border-top: 1px solid #000; }
.c-name { width: 147px; }
.c-tag { width: 22px; }
.c-type { width: 76px; }
.c-info { width: 57px; }
.items th { height: 19px; padding: 0 0 0 5px; background: #303030; text-align: left; font-size: 10px; font-weight: 500; line-height: 12px; white-space: nowrap; }
.items th + th { border-left: 1px solid #111; }
.items th:last-child { border: 0; }
.items thead { border-bottom: 1px solid #000; }
.items .name-head { padding: 0 4px 0 16px; }
.name-head span { display: flex; align-items: center; justify-content: space-between; border-left: 1px solid #111; padding-left: 5px; }
.items td { height: 20px; padding: 0 0 0 6px; white-space: nowrap; border-bottom: 1px solid #222; line-height: 16px; color: #b0b0b0; }
.items td:first-child { padding: 0 1px 0 17px; }
.items td:last-child { padding-left: 2px; }
.selected td { background: #333; }
.item { display: flex; align-items: center; gap: 2px; color: #919191; }
.item span { flex: 1; height: 18px; line-height: 18px; padding-left: 1px; }
.selected .item span { background: #9f9f9f; color: #191919; font-weight: 700; }
.label { display: block; width: 11px; height: 11px; border: 1px solid #111; margin-left: -1px; }
.tan { background: var(--tan); }
.teal { background: var(--teal); }
.project-footer { margin-top: auto; height: 18px; border-top: 1px solid #000; display: flex; align-items: center; gap: 10px; padding: 0 22px 0 4px; }
.depth { width: 45px; height: 16px; margin: 0 -3px 0 -2px; background: #1e1e1e; border: 1px solid #333; border-radius: 3px; font-size: 10px; color: #b4b4b4; }
.scroll { flex: 1; height: 15px; border-radius: 8px; background: #303030; }

.viewer { flex: 1; min-width: 0; border: 1px solid var(--blue); display: flex; flex-direction: column; }
.viewer .tabs { padding: 0 10px; gap: 36px; }
.viewer .tab { padding: 0; }
.viewer .tab.open { height: 25px; gap: 9px; padding: 2px 0 0; }
.viewer .tab b { color: var(--hot); font-weight: 500; }
.viewer .open > :nth-child(3) { margin: 0 0 3px 2px; }
.viewer .open > :last-child { margin: 2px 0 0 -1px; }
.layer-tab { margin-left: 38px; }
.crumbs { height: 24px; padding: 0 18px; border-bottom: 1px solid #000; }
.crumbs button { width: 127px; height: 19px; justify-content: flex-start; padding-left: 8px; background: var(--well); border: 1px solid #303030; border-radius: 3px; color: var(--hot); }
.canvas { flex: 1; display: grid; place-items: center; background: #232323; padding-top: 1px; }
.frame { width: 685px; height: 263px; display: grid; grid-template-columns: repeat(3, 18px); grid-template-rows: repeat(3, 18px); place-content: space-between; place-items: center; }
.frame i { width: 8px; height: 8px; background: #a5cec7; border: 1px solid #8fb6b0; }
.viewer-footer { height: 22px; border-top: 1px solid #000; display: flex; align-items: center; padding-left: 1px; color: #b8b8b8; }
.viewer-footer > button { width: 22px; height: 20px; flex: none; }
.viewer-footer > .on, .viewer-footer > .pressed { background: var(--well); border-radius: 2px; }
.on svg { color: var(--blue); }
.dim svg { color: #474747; }
.viewer-footer > .time { width: 70px; background: #1f1f1f; border: 1px solid #2d2d2d; border-radius: 3px; }
.viewer-footer > .hot { width: 26px; margin-left: 1px; }
.viewer-footer > .exposure-icon { border-left: 1px solid #3a3a3a; width: 23px; }
.hot, .hot svg { color: var(--hot); }
.hot { font-weight: 700; }

.drop { position: relative; display: flex; height: 19px; background: #1f1f1f; border: 1px solid #303030; border-radius: 3px; }
.drop select { appearance: none; width: 100%; padding: 0 20px 0 5px; border: 0; background: none; color: #d2d2d2; outline: 0; }
.drop::after { content: ""; position: absolute; right: 6px; top: 4px; width: 5px; height: 5px; border: solid #b5b5b5; border-width: 0 1px 1px 0; transform: rotate(45deg); pointer-events: none; }
.zoom-drop { width: 69px; }
.res-drop { width: 88px; margin-left: 1px; }
.cam-drop { width: 108px; margin: 0 3px 0 1px; }
.view-drop { width: 71px; }

.timeline { height: 294px; display: flex; flex-direction: column; }
.timeline-tab { height: 27px; padding: 3px 10px 0; display: flex; align-items: center; gap: 10px; color: var(--bright); }
.timeline-tab .chip { margin-right: 1px; }
.timeline-body { flex: 1; display: flex; min-height: 0; }
.outline { width: 533px; }
.controls { height: 37px; border-bottom: 1px solid #000; display: flex; align-items: center; }
.clock { width: 105px; padding: 3px 0 0 11px; color: #1470c0; display: flex; flex-direction: column; align-items: flex-start; }
.clock button { margin-left: 4px; font-size: 15px; line-height: 15px; font-weight: 900; color: var(--hot); }
.clock small { font-size: 10px; line-height: 13px; }
.controls .field { flex: none; width: 226px; }
.switches { display: flex; gap: 11px; margin-left: 16px; align-items: center; }
.switches button:first-child { margin-right: 4px; }
.switches button:nth-child(2) { margin-right: 6px; }
.graph { margin-left: 19px; }
.cols { display: grid; grid-template-columns: 69px 32px 33px 130px 136px 118px 1fr; align-items: center; }
.head { height: 18px; background: #303030; font-size: 10px; }
.head > div + div { border-left: 1px solid #111; }
.slots { display: flex; padding-left: 3px; height: 14px; align-items: center; }
.slots > * { width: 15px; flex: none; text-align: center; }
.head .slots svg { width: 15px; }
.cols .slots:first-child { padding-left: 4px; }
.fx { font-size: 12px; color: #b5b5b5; }
.tag-cell { padding-left: 12px; }
.num { padding-left: 6px; }
.src { padding-left: 4px; display: flex; align-items: center; }
.link { padding-left: 5px; }
.layer { height: 18px; border-top: 1px solid #000; background: #444; }
.cell { height: 14px; background: #303030; border: 1px solid #3e3e3e; border-width: 0 1px 0 0; }
.expand { display: flex; gap: 4px; align-items: center; padding-left: 5px; }
.swatch { width: 12px; height: 12px; background: var(--teal); }
.layer-name { border: 2px solid #a8a8a8; height: 16px; line-height: 12px; padding: 0 1px; margin-left: 3px; width: 111px; color: #b0b0b0; font-weight: 700; white-space: nowrap; }
.layer .num { font-weight: 700; }
.parent { display: flex; align-items: center; padding-left: 6px; gap: 6px; }
.parent .drop { width: 91px; height: 16px; }
.parent .drop::after { top: 3px; }
.prop { height: 18px; border-bottom: 1px solid #212121; }
.prop-name { grid-column: span 4; padding-left: 121px; display: flex; align-items: center; gap: 6px; }
.prop-value { padding-left: 5px; display: flex; color: var(--hot); }
.prop-link { padding-left: 18px; }
.track { position: relative; flex: 1; min-width: 0; border-left: 1px solid #000; overflow: hidden; padding-top: 4px; background: linear-gradient(transparent 36px, #202020 36px 52px, transparent 52px); }
.frame-span { position: absolute; left: 8px; top: 50px; bottom: 0; width: 5px; background: #2f2f2f; }
.navigator { display: flex; height: 12px; background: #202020; border-top: 1px solid #111; padding: 2px 0 1px 1px; }
.navigator i, .workarea i { width: 6px; background: var(--blue); }
.navigator i:first-child { border-radius: 5px 0 0 5px; }
.navigator i:last-child { border-radius: 0 5px 5px 0; }
.navigator b { width: 74.5%; background: #6a6a6a; }
.ruler { display: flex; width: 109%; height: 26px; margin-left: -30px; background: linear-gradient(var(--bg) 17px, #202020 17px); }
.ruler span { flex: 1; text-align: center; font-size: 10px; line-height: 14px; color: #8e8e8e; }
.ruler span::after { content: ""; display: block; width: 1px; height: 10px; margin: 1px auto 0; background: #777; }
.workarea { display: flex; height: 15px; margin-top: -6px; padding-left: 1px; border-bottom: 1px solid #000; position: relative; }
.workarea i:first-child { border-radius: 4px 0 0 4px; }
.workarea i:last-child { border-radius: 0 4px 4px 0; width: 5px; }
.workarea b { width: 7px; background: #555; border-left: 1px solid #111; }
.clip-row { position: relative; height: 22px; padding: 5px 0 1px 8px; border-bottom: 1px solid #1e1e1e; }
.clip { height: 15px; background: linear-gradient(#c0d8d4 0 1px, #8fc0ba 1px, #78a9a2); border-top-left-radius: 4px; }
.prop-row { height: 16px; border-bottom: 1px solid #212121; }
.playhead { position: absolute; left: 7px; top: 5px; bottom: 0; width: 1px; background: var(--blue); }
.playhead svg { position: absolute; left: -6px; top: 16px; }
.ibeam { position: absolute; left: 4px; top: 76px; }
.side { width: 18px; border-left: 1px solid #1a1a1a; padding: 38px 0 0 1px; background: #232323; display: flex; flex-direction: column; gap: 7px; align-items: center; }
.timeline-footer { height: 18px; border-top: 1px solid #000; display: flex; align-items: center; gap: 13px; }
.footer-left { width: 526px; display: flex; align-items: center; gap: 6px; padding-left: 7px; }
.toggle { margin-left: 208px; width: 134px; height: 16px; background: #1e1e1e; border: 1px solid #303030; border-radius: 3px; color: #bcbcbc; }
.time-zoom { appearance: none; width: 44px; height: 12px; margin: 0; background: linear-gradient(transparent 5px, #454545 5px 7px, transparent 7px); }
.time-zoom::-webkit-slider-thumb { appearance: none; width: 10px; height: 10px; border: 2px solid #999; border-radius: 50%; background: var(--bg); }
.scroll-space { flex: 1; margin-left: -7px; height: 17px; background: #1f1f1f; padding: 1px; }
.scroll-space .scroll { display: block; width: 73%; background: #2b2b2b; }

.character { width: 207px; padding: 0 7px 0 5px; overflow: hidden; color: #b2b2b2; }
.char-tabs { margin-left: -4px; justify-content: space-between; }
.char-tabs .overflow { height: 26px; margin-right: -3px; }
.char-tabs .tab.open { gap: 9px; padding-bottom: 1px; margin-left: 2px; }
.char-tabs .tab:not(.open) { color: #959595; }
.font { height: 57px; display: flex; align-items: flex-start; padding-top: 8px; gap: 6px; }
.font-picks { width: 122px; display: grid; gap: 5px; }
.split { background: linear-gradient(90deg, var(--well) 103px, #303030 103px 104px, #1f1f1f 104px); }
.font-tools { width: 20px; display: grid; gap: 6px; padding-top: 2px; justify-items: center; }
.bw { width: 20px; height: 17px; border: 1px solid #aaa; background: linear-gradient(#000 7px, #aaa 7px 9px, #fff 9px); }
.colors { margin-left: -2px; }
.props { display: grid; grid-template-columns: 25px 43px 38px 31px 44px 1fr; grid-auto-rows: 21px; align-items: center; border-top: 2px solid #313131; }
.props span { white-space: nowrap; }
.tri { justify-self: start; width: 10px; height: 12px; }
.tri svg { color: #999; }
.sec1 { padding-bottom: 6px; }
.sec2 { grid-auto-rows: 26px; padding-bottom: 2px; }
.props > svg:first-child { margin-left: 1px; }
.sec3 { padding: 2px 0 7px; border-bottom: 2px solid #313131; }
.faded { color: #565656; }
.stroke-drop { grid-column: 4 / -1; margin-left: -25px; }
.styles { height: 26px; display: flex; align-items: center; gap: 4px; padding-left: 19px; font: 15px/16px "Liberation Serif", serif; color: #c8c8c8; }
.styles div { display: flex; }
.styles button { width: 26px; height: 20px; }
.styles small { font-size: 11px; margin-top: 3px; }
.sup, .sub { font-size: 9px; line-height: 9px; align-self: flex-start; }
.sub { align-self: flex-end; }
.checks { height: 26px; display: flex; align-items: center; padding-left: 6px; }
.checks label { display: flex; flex: none; align-items: center; gap: 4px; width: 98px; white-space: nowrap; }
.checks label:last-child { width: auto; }
.checks input { appearance: none; width: 13px; height: 13px; margin: 0; border: 1px solid #8f8f8f; border-radius: 2px; }
```
